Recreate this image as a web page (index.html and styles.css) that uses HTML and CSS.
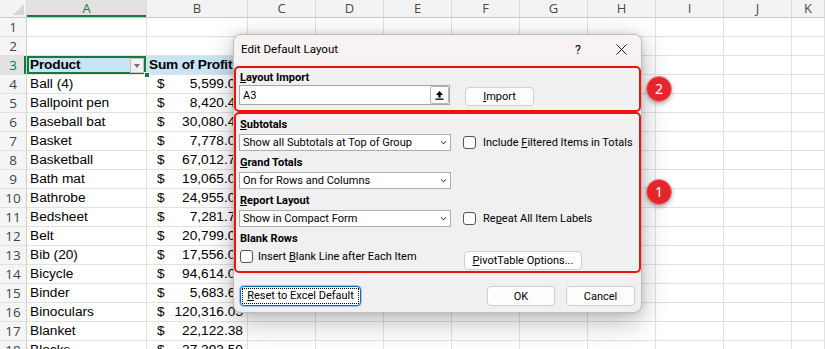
FILE: index.html
```html
<!DOCTYPE html>
<html lang="en">
<head>
    <meta charset="UTF-8">
    <meta name="viewport" content="width=device-width, initial-scale=1.0">
    <title>Edit Default Layout</title>
    <link rel="stylesheet" href="styles.css">
</head>
<body>
    <table class="sheet">
        <colgroup>
            <col class="c-rh"><col class="c-a"><col class="c-b">
            <col class="c-n"><col class="c-n"><col class="c-n"><col class="c-n">
            <col class="c-n"><col class="c-n"><col class="c-n"><col class="c-n">
            <col>
        </colgroup>
        <tr class="head">
            <td class="corner"><span class="tri"></span></td>
            <td class="col-sel">A</td><td>B</td><td>C</td><td>D</td><td>E</td><td>F</td><td>G</td><td>H</td><td>I</td><td>J</td><td>K</td>
        </tr>
        <tr><td class="rh">1</td><td></td><td></td><td></td><td></td><td></td><td></td><td></td><td></td><td></td><td></td><td></td></tr>
        <tr><td class="rh">2</td><td></td><td></td><td></td><td></td><td></td><td></td><td></td><td></td><td></td><td></td><td></td></tr>
        <tr>
            <td class="rh row-sel">3</td>
            <td class="pvt active">
                <div class="pvt-head"><b>Product</b><span class="filter"></span></div>
                <span class="handle"></span>
            </td>
            <td class="pvt"><b>Sum of Profit</b></td>
            <td></td><td></td><td></td><td></td><td></td><td></td><td></td><td></td><td></td>
        </tr>
        <tr><td class="rh">4</td><td>Ball (4)</td><td><div class="acct"><span>$</span><span>5,599.00</span></div></td><td></td><td></td><td></td><td></td><td></td><td></td><td></td><td></td><td></td></tr>
        <tr><td class="rh">5</td><td>Ballpoint pen</td><td><div class="acct"><span>$</span><span>8,420.40</span></div></td><td></td><td></td><td></td><td></td><td></td><td></td><td></td><td></td><td></td></tr>
        <tr><td class="rh">6</td><td>Baseball bat</td><td><div class="acct"><span>$</span><span>30,080.40</span></div></td><td></td><td></td><td></td><td></td><td></td><td></td><td></td><td></td><td></td></tr>
        <tr><td class="rh">7</td><td>Basket</td><td><div class="acct"><span>$</span><span>7,778.00</span></div></td><td></td><td></td><td></td><td></td><td></td><td></td><td></td><td></td><td></td></tr>
        <tr><td class="rh">8</td><td>Basketball</td><td><div class="acct"><span>$</span><span>67,012.70</span></div></td><td></td><td></td><td></td><td></td><td></td><td></td><td></td><td></td><td></td></tr>
        <tr><td class="rh">9</td><td>Bath mat</td><td><div class="acct"><span>$</span><span>19,065.00</span></div></td><td></td><td></td><td></td><td></td><td></td><td></td><td></td><td></td><td></td></tr>
        <tr><td class="rh">10</td><td>Bathrobe</td><td><div class="acct"><span>$</span><span>24,955.00</span></div></td><td></td><td></td><td></td><td></td><td></td><td></td><td></td><td></td><td></td></tr>
        <tr><td class="rh">11</td><td>Bedsheet</td><td><div class="acct"><span>$</span><span>7,281.70</span></div></td><td></td><td></td><td></td><td></td><td></td><td></td><td></td><td></td><td></td></tr>
        <tr><td class="rh">12</td><td>Belt</td><td><div class="acct"><span>$</span><span>20,799.00</span></div></td><td></td><td></td><td></td><td></td><td></td><td></td><td></td><td></td><td></td></tr>
        <tr><td class="rh">13</td><td>Bib (20)</td><td><div class="acct"><span>$</span><span>17,556.00</span></div></td><td></td><td></td><td></td><td></td><td></td><td></td><td></td><td></td><td></td></tr>
        <tr><td class="rh">14</td><td>Bicycle</td><td><div class="acct"><span>$</span><span>94,614.00</span></div></td><td></td><td></td><td></td><td></td><td></td><td></td><td></td><td></td><td></td></tr>
        <tr><td class="rh">15</td><td>Binder</td><td><div class="acct"><span>$</span><span>5,683.60</span></div></td><td></td><td></td><td></td><td></td><td></td><td></td><td></td><td></td><td></td></tr>
        <tr><td class="rh">16</td><td>Binoculars</td><td><div class="acct"><span>$</span><span>120,316.03</span></div></td><td></td><td></td><td></td><td></td><td></td><td></td><td></td><td></td><td></td></tr>
        <tr><td class="rh">17</td><td>Blanket</td><td><div class="acct"><span>$</span><span>22,122.38</span></div></td><td></td><td></td><td></td><td></td><td></td><td></td><td></td><td></td><td></td></tr>
        <tr><td class="rh">18</td><td>Blocks</td><td><div class="acct"><span>$</span><span>27,293.50</span></div></td><td></td><td></td><td></td><td></td><td></td><td></td><td></td><td></td><td></td></tr>
    </table>

    <div class="dialog">
        <div class="titlebar">
            <span class="title">Edit Default Layout</span>
            <span class="help">?</span>
            <span class="close">
                <svg width="11" height="11" viewBox="0 0 11 11"><path d="M0.5 0.5L10.5 10.5M10.5 0.5L0.5 10.5" stroke="#1a1a1a" stroke-width="1"/></svg>
            </span>
        </div>

        <div class="section sec-import">
            <div class="lbl"><u>L</u>ayout Import</div>
            <div class="line">
                <div class="input">
                    <span class="val">A3</span>
                    <span class="pick">
                        <svg width="9" height="10" viewBox="0 0 9 10"><path d="M4.5 1L1 5h2.3v2.5h2.4V5H8z" fill="#000"/><rect x="0.5" y="8.5" width="8" height="1.3" fill="#000"/></svg>
                    </span>
                </div>
                <button class="btn btn-import"><u>I</u>mport</button>
            </div>
        </div>

        <div class="section sec-opts">
            <div class="lbl"><u>S</u>ubtotals</div>
            <div class="line">
                <div class="select">Show all Subtotals at Top of Group<span class="chev"></span></div>
                <label class="check"><span class="box"></span><span>Include <u>F</u>iltered Items in Totals</span></label>
            </div>
            <div class="lbl"><u>G</u>rand Totals</div>
            <div class="line">
                <div class="select">On for Rows and Columns<span class="chev"></span></div>
            </div>
            <div class="lbl"><u>R</u>eport Layout</div>
            <div class="line">
                <div class="select">Show in Compact Form<span class="chev"></span></div>
                <label class="check"><span class="box"></span><span>Re<u>p</u>eat All Item Labels</span></label>
            </div>
            <div class="lbl">Blank Rows</div>
            <div class="line last">
                <label class="check check-blank"><span class="box"></span><span>Insert <u>B</u>lank Line after Each Item</span></label>
                <button class="btn btn-pivot"><u>P</u>ivotTable Options...</button>
            </div>
        </div>

        <div class="footer">
            <button class="btn btn-reset"><span><u>R</u>eset to Excel Default</span></button>
            <button class="btn btn-ok">OK</button>
            <button class="btn btn-cancel">Cancel</button>
        </div>
    </div>

    <div class="badge badge-2">2</div>
    <div class="badge badge-1">1</div>
</body>
</html>
```

FILE: styles.css
```css
*{
    padding: 0;
    margin: 0;
    box-sizing: border-box;
}

body{
    position: relative;
    width: 825px;
    height: 349px;
    overflow: hidden;
    background: #fff;
    font-family: "Liberation Sans", Arial, sans-serif;
}

/* spreadsheet */
.sheet{
    width: 825px;
    table-layout: fixed;
    border-collapse: separate;
    border-spacing: 0;
}

.c-rh{ width: 27px; }
.c-a{ width: 120px; }
.c-b{ width: 101px; }
.c-n{ width: 68px; }

.sheet tr{
    height: 19px;
}

.sheet td{
    padding: 0 3px;
    border-right: 1px solid #e1e1e1;
    border-bottom: 1px solid #e1e1e1;
    font-size: 13.7px;
    line-height: 18px;
    color: #000;
    white-space: nowrap;
    overflow: hidden;
}

.sheet .head{
    height: 18px;
}

.sheet .head td{
    background: #f3f3f3;
    border-right-color: #d9d9d9;
    border-bottom-color: #c9c9c9;
    text-align: center;
    font-family: "Open Sans", sans-serif;
    font-size: 13px;
    line-height: 17px;
    color: #4a4a4a;
}

.sheet .head .col-sel{
    background: #e2e2e2;
    color: #107c41;
    box-shadow: inset 0 -2px 0 #107c41;
}

.corner{
    position: relative;
}

.tri{
    position: absolute;
    right: 2px;
    bottom: 2px;
    border-left: 11px solid transparent;
    border-bottom: 11px solid #d6d6d6;
}

.sheet .rh{
    padding: 0;
    background: #f5f5f5;
    border-right-color: #cfcfcf;
    text-align: center;
    font-family: "Open Sans", sans-serif;
    font-size: 13.5px;
    color: #444;
}

.sheet .row-sel{
    background: #e2e2e2;
    color: #107c41;
    box-shadow: inset -2px 0 0 #107c41;
}

.sheet .pvt{
    padding: 0 1px 0 2px;
    background: #c7e5f6;
    overflow: visible;
}

.pvt b{
    letter-spacing: -0.2px;
}

.active{
    position: relative;
    box-shadow: inset 0 0 0 2px #107c41;
}

.pvt-head{
    display: flex;
    align-items: center;
    justify-content: space-between;
    padding-left: 1px;
}

.filter{
    position: relative;
    width: 14px;
    height: 15px;
    margin-right: 1px;
    background: #f1f1f1;
    border: 1px solid #c4c4c4;
}

.filter::after{
    content: "";
    position: absolute;
    left: 3px;
    top: 5px;
    border-left: 3.5px solid transparent;
    border-right: 3.5px solid transparent;
    border-top: 4px solid #707070;
}

.handle{
    position: absolute;
    right: -4px;
    bottom: -4px;
    width: 6px;
    height: 6px;
    background: #107c41;
    border: 1px solid #fff;
    z-index: 2;
}

.acct{
    display: flex;
    justify-content: space-between;
    padding: 0 1px 0 7px;
}

/* dialog */
.dialog{
    position: absolute;
    left: 233px;
    top: 34px;
    width: 409px;
    height: 279px;
    background: #f0f0f0;
    border: 1px solid #bdbdbd;
    border-radius: 8px;
    box-shadow: 0 8px 28px rgba(0, 0, 0, 0.28), 0 0 6px rgba(0, 0, 0, 0.12);
    font-family: Roboto, "Noto Sans", sans-serif;
    font-size: 11px;
    color: #000;
    white-space: nowrap;
    overflow: hidden;
}

.titlebar{
    display: flex;
    align-items: center;
    height: 28px;
    padding-left: 7px;
    background: #f8f3f2;
}

.title{
    font-size: 11.6px;
}

.help{
    width: 20px;
    margin-left: auto;
    margin-right: 16px;
    text-align: center;
    font-size: 12.5px;
}

.close{
    display: flex;
    justify-content: center;
    width: 34px;
    margin-right: 3px;
}

.section{
    border: 2px solid #f01010;
    border-radius: 5px;
    padding: 0 4px 0 3px;
}

.sec-import{
    height: 46px;
    margin-top: 3px;
}

.sec-opts{
    height: 161px;
    padding-top: 3px;
}

.lbl{
    height: 16px;
    line-height: 16px;
    padding-left: 1px;
    font-weight: bold;
}

.sec-import .lbl{
    height: 17px;
    line-height: 19px;
}

.sec-opts .lbl + .line + .lbl{
    margin-top: 4px;
}

.line{
    display: flex;
    align-items: center;
    height: 17px;
    margin-top: 1px;
}

.sec-import .line{
    height: 20px;
    margin-top: 0;
}

.input{
    display: flex;
    align-items: center;
    justify-content: space-between;
    width: 211px;
    height: 20px;
    background: #fff;
    border: 1px solid #a6a6a6;
    padding-left: 3px;
}

.pick{
    display: flex;
    align-items: center;
    justify-content: center;
    width: 19px;
    height: 18px;
    background: #fdfdfd;
    border: 1px solid #b5b5b5;
    border-radius: 2px;
}

.btn{
    height: 19px;
    background: #fdfdfd;
    border: 1px solid #d0d0d0;
    border-radius: 4px;
    font-family: Roboto, "Noto Sans", sans-serif;
    font-size: 11px;
    color: #000;
    white-space: nowrap;
}

.btn-import{
    width: 69px;
    margin-left: 15px;
    margin-top: 3px;
}

.select{
    position: relative;
    width: 212px;
    height: 17px;
    line-height: 15px;
    padding-left: 3px;
    background: #fff;
    border: 1px solid #adadad;
}

.chev{
    position: absolute;
    right: 4px;
    top: 4px;
    width: 5px;
    height: 5px;
    border-right: 1px solid #333;
    border-bottom: 1px solid #333;
    transform: rotate(45deg) scale(0.8);
}

.check{
    display: flex;
    align-items: center;
    margin-left: 12px;
}

.box{
    width: 13px;
    height: 13px;
    margin-right: 7px;
    background: #fff;
    border: 1px solid #555;
    border-radius: 3px;
}

.line.last{
    align-items: flex-start;
    height: 24px;
}

.check-blank{
    margin-left: 1px;
    margin-top: 2px;
}

.check-blank .box{
    margin-right: 5px;
}

.btn-pivot{
    width: 118px;
    margin-left: auto;
    margin-right: 53px;
    margin-top: 3px;
}

.footer{
    display: flex;
    margin-top: 13px;
    padding: 0 6px;
}

.footer .btn{
    height: 20px;
}

.btn-reset{
    width: 121px;
    padding: 2px;
    border-color: #0f6cbd;
    box-shadow: 0 0 0 1px #9cc6ee;
}

.btn-reset span{
    display: block;
    height: 14px;
    line-height: 13px;
    outline: 1px dotted #000;
}

.btn-ok{
    width: 68px;
    margin-left: auto;
}

.btn-cancel{
    width: 69px;
    margin-left: 11px;
}

/* callouts */
.badge{
    position: absolute;
    left: 646px;
    width: 26px;
    height: 26px;
    border-radius: 50%;
    background: #e3262c;
    border: 1px solid #f57a7d;
    box-shadow: 0 2px 4px rgba(0, 0, 0, 0.3);
    color: #fff;
    font-family: "Noto Sans", sans-serif;
    font-size: 14px;
    line-height: 24px;
    text-align: center;
}

.badge-2{
    top: 76px;
}

.badge-1{
    top: 179px;
}
```
